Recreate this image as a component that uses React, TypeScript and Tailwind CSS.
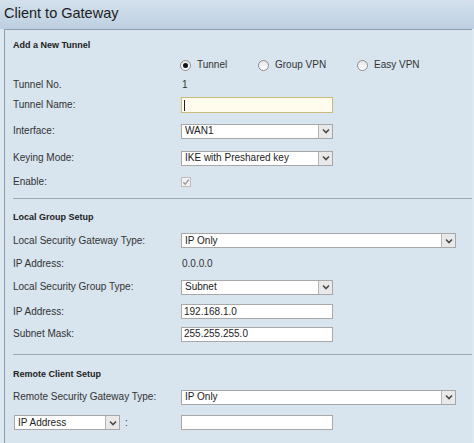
import React from "react";

function Chevron() {
  return (
    <svg width="8" height="6" viewBox="0 0 8 6" className="block">
      <polyline points="1,1.5 4,4.5 7,1.5" fill="none" stroke="#4a4a4a" strokeWidth="1.6" />
    </svg>
  );
}

function Select({ value, w }: { value: string; w: string }) {
  return (
    <div className={`${w} h-[15px] flex items-stretch border border-[#a7a7a7] bg-white`}>
      <div className="flex-1 flex items-center pl-[3px] text-[10px] text-[#222] leading-none">{value}</div>
      <div className="w-[14px] flex items-center justify-center bg-[#e9e9e9] border-l border-[#b3b3b3]">
        <Chevron />
      </div>
    </div>
  );
}

function TextInput({ value, w, h = "h-[15px]", extra = "" }: { value: string; w: string; h?: string; extra?: string }) {
  return (
    <div className={`${w} ${h} flex items-center border border-[#a9a9a9] bg-white pl-[2px] text-[10px] text-[#222] leading-none ${extra}`}>
      {value}
    </div>
  );
}

function Radio({ checked }: { checked?: boolean }) {
  return (
    <div className="w-[11px] h-[11px] rounded-full border border-[#8c8c8c] bg-gradient-to-b from-[#e6e6e6] to-white flex items-center justify-center">
      {checked && <div className="w-[5px] h-[5px] rounded-full bg-[#111]" />}
    </div>
  );
}

function Row({ h, label, children }: { h: string; label?: React.ReactNode; children?: React.ReactNode }) {
  return (
    <div className={`${h} flex items-center`}>
      <div className="w-[168px] shrink-0 text-[10px] text-[#333] leading-none">{label}</div>
      {children}
    </div>
  );
}

function Heading({ h, mt, children }: { h: string; mt: string; children: React.ReactNode }) {
  return (
    <div className={`${h} ${mt} flex items-center text-[9px] font-bold text-[#222] leading-none`}>{children}</div>
  );
}

export default function App() {
  return (
    <div className="w-[474px] h-[443px] overflow-hidden bg-[#dde8f1] font-['Liberation_Sans',Arial,sans-serif]">
      <div className="h-[29px] bg-gradient-to-b from-[#d4e1ed] to-[#bdd0e1] flex items-center pl-[4px] pb-[2px] text-[14.5px] text-[#1c1c1c] leading-none">
        Client to Gateway
      </div>
      <div className="ml-[4px] mr-[2px] h-[414px] border-t border-l border-[#8e9eac] bg-[#d8e4ee] pl-[8px]">
        <Heading h="h-[18px]" mt="mt-[6px]">Add a New Tunnel</Heading>
        <Row h="h-[22px]">
          <div className="flex items-center gap-[6px] w-[78px] -ml-[1px]">
            <Radio checked />
            <span className="text-[10px] text-[#333] leading-none">Tunnel</span>
          </div>
          <div className="flex items-center gap-[6px] w-[99px]">
            <Radio />
            <span className="text-[10px] text-[#333] leading-none">Group VPN</span>
          </div>
          <div className="flex items-center gap-[6px]">
            <Radio />
            <span className="text-[10px] text-[#333] leading-none">Easy VPN</span>
          </div>
        </Row>
        <Row h="h-[17px]" label="Tunnel No.">
          <span className="text-[10px] text-[#333] leading-none pl-[1px]">1</span>
        </Row>
        <Row h="h-[24px]" label="Tunnel Name:">
          <div className="w-[152px] h-[16px] flex items-center border border-[#cdbb7c] bg-[#fffcee] pl-[2px]">
            <div className="w-[1px] h-[11px] bg-[#222]" />
          </div>
        </Row>
        <Row h="h-[28px]" label="Interface:">
          <Select value="WAN1" w="w-[152px]" />
        </Row>
        <Row h="h-[26px]" label="Keying Mode:">
          <Select value="IKE with Preshared key" w="w-[152px]" />
        </Row>
        <Row h="h-[21px]" label="Enable:">
          <div className="w-[10px] h-[10px] border border-[#bdbdbd] bg-[#f2f2f2] flex items-center justify-center">
            <svg width="8" height="8" viewBox="0 0 8 8">
              <polyline points="1.3,4.2 3.2,6.2 6.8,1.5" fill="none" stroke="#9a9a9a" strokeWidth="1.3" />
            </svg>
          </div>
        </Row>
        <div className="mt-[6px] h-px bg-[#9aa9b6]" />
        <Heading h="h-[19px]" mt="mt-[9px]">Local Group Setup</Heading>
        <Row h="h-[27px]" label="Local Security Gateway Type:">
          <Select value="IP Only" w="w-[275px]" />
        </Row>
        <Row h="h-[20px]" label="IP Address:">
          <span className="text-[10px] text-[#333] leading-none pl-[1px]">0.0.0.0</span>
        </Row>
        <Row h="h-[26px]" label="Local Security Group Type:">
          <Select value="Subnet" w="w-[152px]" />
        </Row>
        <Row h="h-[23px]" label="IP Address:">
          <TextInput value="192.168.1.0" w="w-[152px]" />
        </Row>
        <Row h="h-[22px]" label="Subnet Mask:">
          <TextInput value="255.255.255.0" w="w-[152px]" />
        </Row>
        <div className="mt-[9px] h-px bg-[#9aa9b6]" />
        <Heading h="h-[18px]" mt="mt-[10px]">Remote Client Setup</Heading>
        <Row h="h-[28px]" label="Remote Security Gateway Type:">
          <Select value="IP Only" w="w-[275px]" />
        </Row>
        <div className="h-[23px] flex items-center">
          <div className="w-[168px] shrink-0 flex items-center">
            <div className="ml-[1px]">
              <Select value="IP Address" w="w-[106px]" />
            </div>
            <span className="ml-[5px] text-[10px] text-[#333] leading-none">:</span>
          </div>
          <TextInput value="" w="w-[152px]" />
        </div>
      </div>
    </div>
  );
}
